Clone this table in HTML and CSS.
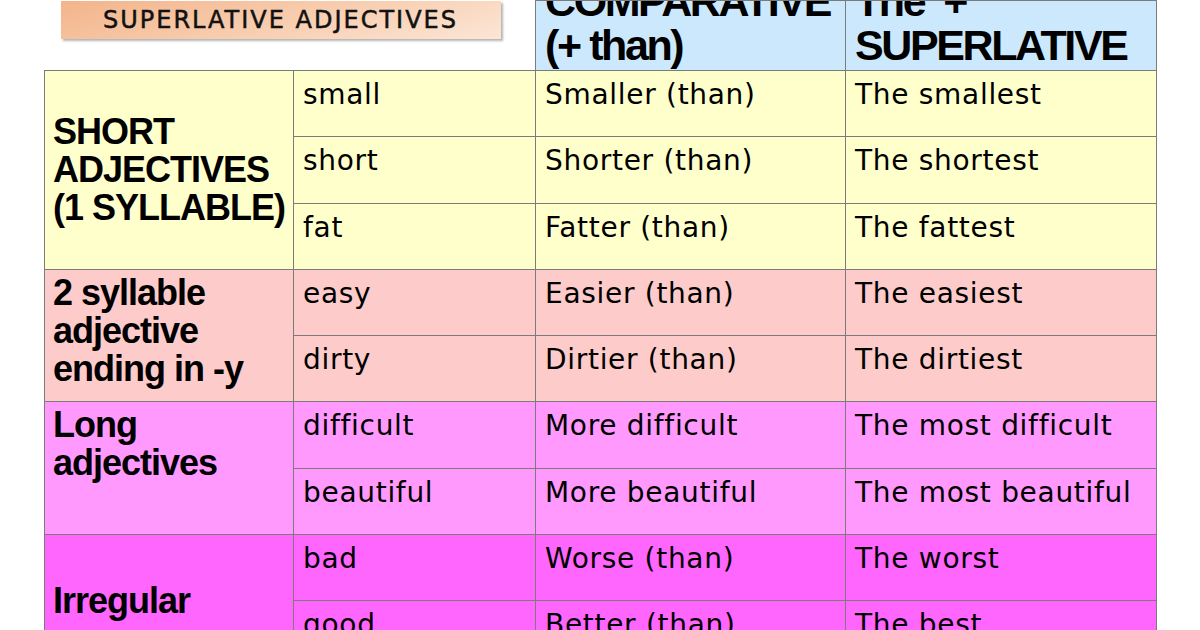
FILE: index.html
```html
<!DOCTYPE html>
<html>
<head>
<meta charset="utf-8">
<link rel="stylesheet" href="styles.css">
</head>
<body>
<table class="chart">
  <colgroup>
    <col class="c1"><col class="c2"><col class="c3"><col class="c4">
  </colgroup>
  <thead>
    <tr class="head">
      <th colspan="2" class="title-cell"><div class="title-box">SUPERLATIVE ADJECTIVES</div></th>
      <th class="hd"><div class="hd-in">COMPARATIVE<br>(+ than)</div></th>
      <th class="hd"><div class="hd-in">The&nbsp; +<br>SUPERLATIVE</div></th>
    </tr>
  </thead>
  <tbody>
    <tr class="yellow">
      <td rowspan="3" class="cat mid">SHORT<br>ADJECTIVES<br>(1 SYLLABLE)</td>
      <td>small</td><td>Smaller (than)</td><td>The smallest</td>
    </tr>
    <tr class="yellow"><td>short</td><td>Shorter (than)</td><td>The shortest</td></tr>
    <tr class="yellow"><td>fat</td><td>Fatter (than)</td><td>The fattest</td></tr>
    <tr class="pink">
      <td rowspan="2" class="cat top">2 syllable<br>adjective<br>ending in -y</td>
      <td>easy</td><td>Easier (than)</td><td>The easiest</td>
    </tr>
    <tr class="pink"><td>dirty</td><td>Dirtier (than)</td><td>The dirtiest</td></tr>
    <tr class="violet">
      <td rowspan="2" class="cat top">Long<br>adjectives</td>
      <td>difficult</td><td>More difficult</td><td>The most difficult</td>
    </tr>
    <tr class="violet"><td>beautiful</td><td>More beautiful</td><td>The most beautiful</td></tr>
    <tr class="magenta">
      <td rowspan="2" class="cat mid">Irregular</td>
      <td>bad</td><td>Worse (than)</td><td>The worst</td>
    </tr>
    <tr class="magenta"><td>good</td><td>Better (than)</td><td>The best</td></tr>
  </tbody>
</table>
</body>
</html>
```

FILE: styles.css
```css
html, body {
  margin: 0;
  padding: 0;
  background: #ffffff;
  width: 1200px;
  height: 630px;
  overflow: hidden;
}

.chart {
  border-collapse: collapse;
  table-layout: fixed;
  margin-left: 44px;
  width: 1112px;
}

.c1 { width: 249px; }
.c2 { width: 242px; }
.c3 { width: 310px; }
.c4 { width: 311px; }

.chart td,
.chart th {
  border: 1px solid #7b7b7b;
  padding: 0;
  text-align: left;
}

.head { height: 70px; }

.chart .title-cell {
  border: none;
  border-bottom: 1px solid #7b7b7b;
  vertical-align: top;
  background: #ffffff;
}

.title-box {
  margin-left: 16px;
  width: 440px;
  height: 38px;
  box-sizing: border-box;
  background: linear-gradient(165deg, #f3b48a 0%, #f8cfb2 55%, #fce6d6 100%);
  box-shadow: 2px 2px 2px rgba(120, 120, 120, 0.55);
  font-family: "Comic Sans MS", "DejaVu Sans", sans-serif;
  font-weight: normal;
  font-size: 24px;
  letter-spacing: 2px;
  color: #111;
  text-align: center;
  line-height: 38px;
  -webkit-text-stroke: 0.5px #111;
}

.chart .hd {
  background: #cce8fc;
  vertical-align: bottom;
  padding: 0;
}

.hd-in {
  height: 69px;
  overflow: hidden;
  display: flex;
  flex-direction: column;
  justify-content: flex-end;
  padding: 0 0 3px 9px;
  box-sizing: border-box;
  font-family: "Liberation Sans", Arial, sans-serif;
  font-weight: bold;
  font-size: 43px;
  line-height: 44px;
  letter-spacing: -2.4px;
  color: #000;
  white-space: nowrap;
}

.chart tbody tr { height: 66.3px; }

.chart tbody td {
  font-family: "Comic Sans MS", "DejaVu Sans", sans-serif;
  font-size: 28px;
  line-height: 32px;
  letter-spacing: 0.7px;
  vertical-align: top;
  padding: 8px 0 0 9px;
  color: #000;
  white-space: nowrap;
}

.chart tbody td.cat {
  font-family: "Liberation Sans", Arial, sans-serif;
  font-weight: bold;
  font-size: 36px;
  line-height: 38px;
  letter-spacing: -1px;
  padding: 4px 0 0 8px;
}

.chart tbody td.cat.mid { vertical-align: middle; padding-top: 0; }

.yellow td { background: #ffffcc; }
.pink td { background: #fdcbc9; }
.violet td { background: #ff99fd; }
.magenta td { background: #ff66fe; }
```
